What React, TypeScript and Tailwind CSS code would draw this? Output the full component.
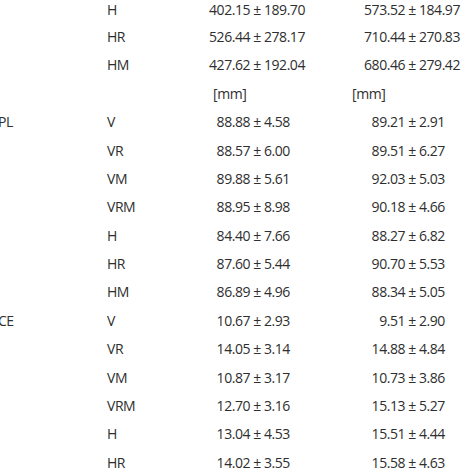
type Row = { group?: string; label?: string; a?: string; b?: string; unit?: boolean };

const rows: Row[] = [
  { label: "H", a: "402.15 ± 189.70", b: "573.52 ± 184.97" },
  { label: "HR", a: "526.44 ± 278.17", b: "710.44 ± 270.83" },
  { label: "HM", a: "427.62 ± 192.04", b: "680.46 ± 279.42" },
  { unit: true },
  { group: "PL", label: "V", a: "88.88 ± 4.58", b: "89.21 ± 2.91" },
  { label: "VR", a: "88.57 ± 6.00", b: "89.51 ± 6.27" },
  { label: "VM", a: "89.88 ± 5.61", b: "92.03 ± 5.03" },
  { label: "VRM", a: "88.95 ± 8.98", b: "90.18 ± 4.66" },
  { label: "H", a: "84.40 ± 7.66", b: "88.27 ± 6.82" },
  { label: "HR", a: "87.60 ± 5.44", b: "90.70 ± 5.53" },
  { label: "HM", a: "86.89 ± 4.96", b: "88.34 ± 5.05" },
  { group: "CE", label: "V", a: "10.67 ± 2.93", b: "9.51 ± 2.90" },
  { label: "VR", a: "14.05 ± 3.14", b: "14.88 ± 4.84" },
  { label: "VM", a: "10.87 ± 3.17", b: "10.73 ± 3.86" },
  { label: "VRM", a: "12.70 ± 3.16", b: "15.13 ± 5.27" },
  { label: "H", a: "13.04 ± 4.53", b: "15.51 ± 4.44" },
  { label: "HR", a: "14.02 ± 3.55", b: "15.58 ± 4.63" },
];

// value cell, lined up on the ± sign
function Value({ text }: { text?: string }) {
  if (!text) return <div />;
  const [mean, sd] = text.split(" ± ");
  return (
    <div className="grid grid-cols-[1fr_auto_1fr] whitespace-pre">
      <span className="text-right">{mean} </span>
      <span>±</span>
      <span> {sd}</span>
    </div>
  );
}

export default function App() {
  return (
    <div
      className="h-[474px] w-[474px] overflow-hidden bg-white text-[14px] tracking-[-0.45px] text-[#2e2e2e]"
      style={{ fontFamily: '"Open Sans", sans-serif' }}
    >
      <div className="flex flex-col">
        {rows.map((r, i) => (
          <div
            key={i}
            className={
              i === 0
                ? "grid h-[22.375px] grid-cols-[107px_98px_104px_160px] items-start leading-[19px]"
                : "grid h-[28.375px] grid-cols-[107px_98px_104px_160px] items-start pt-[4.7px] leading-[19px]"
            }
          >
            <div className="-ml-[2px]">{r.group}</div>
            <div>{r.label}</div>
            {r.unit ? (
              <>
                <div className="pl-[8px]">[mm]</div>
                <div className="pl-[43px]">[mm]</div>
              </>
            ) : (
              <>
                <Value text={r.a} />
                <div className="pl-[46px]">
                  <Value text={r.b} />
                </div>
              </>
            )}
          </div>
        ))}
      </div>
    </div>
  );
}
